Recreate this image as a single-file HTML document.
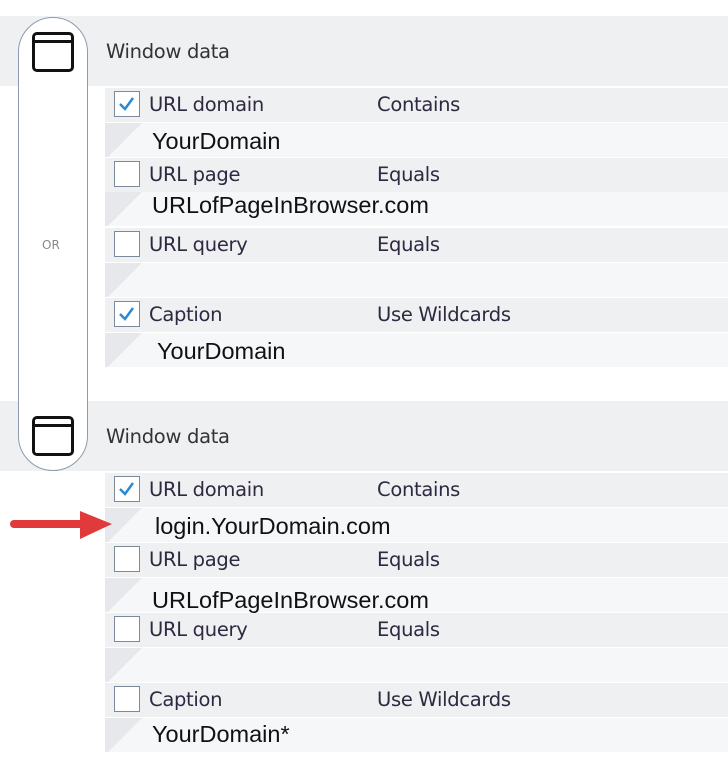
<!DOCTYPE html>
<html><head><meta charset="utf-8"><style>
*{margin:0;padding:0;box-sizing:border-box}
body{width:728px;height:759px;background:#fff;position:relative;overflow:hidden;font-family:"DejaVu Sans","Liberation Sans",sans-serif}
.hdr{position:absolute;left:0;width:728px;height:70px;background:#eff0f2}
.hdr span{position:absolute;left:106px;top:24px;font-size:19.5px;color:#333;letter-spacing:-0.3px}
.lab{position:absolute;left:105px;width:623px;height:34px;background:#eef0f2}
.lab .cb{position:absolute;left:9px;top:3px;width:26px;height:26px;border:1.5px solid #7d8a9c;background:#fff}
.lab .t1{position:absolute;left:44px;top:5px;font-size:19.5px;color:#2e2840;letter-spacing:-0.3px}
.lab .t2{position:absolute;left:272px;top:5px;font-size:19.5px;color:#2e2840;letter-spacing:-0.3px}
.val{position:absolute;left:105px;width:623px;height:34px;background:linear-gradient(135deg,#e6e8eb 0,#e6e8eb 50%,#f6f7f9 50%) 0 0/40px 34px no-repeat,#f6f7f9}
.val span{position:absolute;left:47px;top:5px;font-family:"Liberation Sans",Arial,sans-serif;font-size:23.5px;color:#111}
.pill{position:absolute;left:18px;top:17px;width:70px;height:454px;border:1.5px solid #8c9bb0;border-radius:35px;background:#fff}
.win{position:absolute;left:32px;width:42px;height:40px;border:3.5px solid #111;border-radius:5px;background:#fff}
.win:after{content:"";position:absolute;left:0;right:0;top:5px;border-top:3px solid #111}
</style></head><body>
<div class="hdr" style="top:16px"><span>Window data</span></div>
<div class="hdr" style="top:401px"><span>Window data</span></div>
<div class="pill"></div>
<div style="position:absolute;left:42px;top:238px;font-size:12px;color:#888">OR</div>
<div class="win" style="top:32px"></div>
<div class="win" style="top:416px"></div>

<div class="lab" style="top:88px"><div class="cb"><svg width="23" height="23" style="position:absolute;left:0;top:0"><path d="M5 12 L10 17 L18 6" stroke="#2a8ad0" stroke-width="2.5" fill="none"/></svg></div><span class="t1">URL domain</span><span class="t2">Contains</span></div>
<div class="val" style="top:123px"><span>YourDomain</span></div>
<div class="lab" style="top:158px"><div class="cb"></div><span class="t1">URL page</span><span class="t2">Equals</span></div>
<div class="val" style="top:192px"><span style="top:0">URLofPageInBrowser.com</span></div>
<div class="lab" style="top:228px"><div class="cb"></div><span class="t1">URL query</span><span class="t2">Equals</span></div>
<div class="val" style="top:263px"></div>
<div class="lab" style="top:298px"><div class="cb"><svg width="23" height="23" style="position:absolute;left:0;top:0"><path d="M5 12 L10 17 L18 6" stroke="#2a8ad0" stroke-width="2.5" fill="none"/></svg></div><span class="t1">Caption</span><span class="t2">Use Wildcards</span></div>
<div class="val" style="top:333px"><span style="left:52px">YourDomain</span></div>

<div class="lab" style="top:473px"><div class="cb"><svg width="23" height="23" style="position:absolute;left:0;top:0"><path d="M5 12 L10 17 L18 6" stroke="#2a8ad0" stroke-width="2.5" fill="none"/></svg></div><span class="t1">URL domain</span><span class="t2">Contains</span></div>
<div class="val" style="top:508px"><span style="left:50px">login.YourDomain.com</span></div>
<div class="lab" style="top:543px"><div class="cb"></div><span class="t1">URL page</span><span class="t2">Equals</span></div>
<div class="val" style="top:578px"><span style="top:9px">URLofPageInBrowser.com</span></div>
<div class="lab" style="top:613px"><div class="cb"></div><span class="t1">URL query</span><span class="t2">Equals</span></div>
<div class="val" style="top:648px"></div>
<div class="lab" style="top:683px"><div class="cb"></div><span class="t1">Caption</span><span class="t2">Use Wildcards</span></div>
<div class="val" style="top:718px"><span style="top:3px">YourDomain*</span></div>

<svg width="120" height="40" style="position:absolute;left:0;top:506px">
<path d="M14 18 L82 18" stroke="#e03a3a" stroke-width="8" stroke-linecap="round"/>
<path d="M80 5 L112 18 L80 33 Z" fill="#e03a3a"/>
</svg>
</body></html>
